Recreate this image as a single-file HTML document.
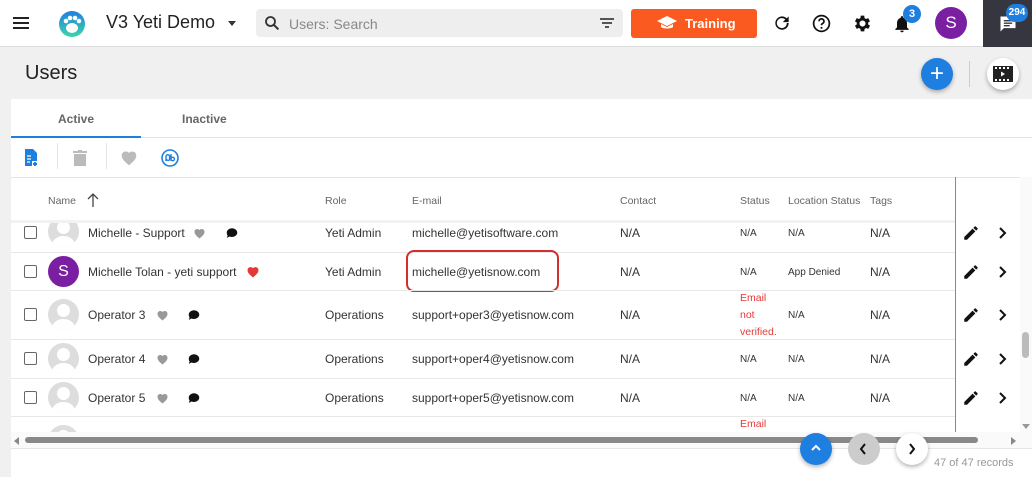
<!DOCTYPE html>
<html><head><style>
*{box-sizing:border-box;margin:0;padding:0}
body{width:1032px;height:477px;overflow:hidden;background:#f0f0f0;font-family:"Liberation Sans",sans-serif;color:#333;position:relative}
.a{position:absolute}
.top{left:0;top:0;width:1032px;height:47px;background:#fff;border-bottom:1px solid #ddd}
.t{font-size:12px;color:#333;white-space:nowrap}
.h{font-size:10.5px;color:#666}
.cb{width:13px;height:13px;border:1.5px solid #666;border-radius:2px}
.av{width:31px;height:31px;border-radius:50%;background:#ddd;overflow:hidden}
.av:before{content:"";position:absolute;left:9px;top:5px;width:13px;height:13px;border-radius:50%;background:#fff}
.av:after{content:"";position:absolute;left:4px;top:20px;width:23px;height:18px;border-radius:50%;background:#fff}
.rl{left:11px;width:944px;height:1px;background:#e8e8e8}
.red{color:#e53935;font-size:10.5px;line-height:17px}
.na{font-size:10px}
</style></head><body>
<svg width="0" height="0" style="position:absolute"><defs><path id="hrt" d="M12 21l-1.5-1.3C5 15 2 12 2 7.5 2 4.4 4.4 2 7.5 2c1.7 0 3.4.8 4.5 2.1C13.1 2.8 14.8 2 16.5 2 19.6 2 22 4.4 22 7.5c0 4.5-3 7.5-8.5 12.2z"/><path id="pen" d="M3 17.3V21h3.7L17.8 9.9l-3.7-3.7zM20.7 7a1 1 0 0 0 0-1.4l-2.3-2.3a1 1 0 0 0-1.4 0l-1.8 1.8 3.7 3.7z"/><path id="chat" d="M2 6c0-3 3-5 6-5s6 2 6 5-3 5-6 5c-1 0-2-.2-2.8-.5L2 12l1-2.5C2.4 8.5 2 7.3 2 6z"/></defs></svg>
<div class="a top"></div>
<div class="a" style="left:13px;top:17px;width:16px;height:2px;background:#222;box-shadow:0 5px 0 #222,0 10px 0 #222"></div>
<svg class="a" style="left:57px;top:8px" width="30" height="30" viewBox="0 0 30 30"><defs><linearGradient id="g" x1="0" y1="0" x2="0" y2="1"><stop offset="0" stop-color="#1e7fe0"/><stop offset="1" stop-color="#3dd6a8"/></linearGradient></defs><circle cx="15" cy="16" r="13" fill="url(#g)"/><ellipse cx="15" cy="20" rx="6" ry="5" fill="#fff"/><circle cx="9" cy="13" r="2.3" fill="#fff"/><circle cx="13" cy="10" r="2.3" fill="#fff"/><circle cx="18" cy="10" r="2.3" fill="#fff"/><circle cx="22" cy="13" r="2.3" fill="#fff"/></svg>
<div class="a" style="left:106px;top:12px;font-size:18px;color:#222">V3 Yeti Demo</div>
<div class="a" style="left:228px;top:21px;border:4px solid transparent;border-top:5px solid #333"></div>
<div class="a" style="left:256px;top:9px;width:367px;height:28px;background:#eee;border-radius:4px"></div>
<svg class="a" style="left:263px;top:14px" width="18" height="18" viewBox="0 0 24 24"><circle cx="10" cy="10" r="6" stroke="#333" stroke-width="2.4" fill="none"/><path d="M14.5 14.5l6 6" stroke="#333" stroke-width="2.6"/></svg>
<div class="a" style="left:289px;top:16px;font-size:14px;color:#888">Users: Search</div>
<div class="a" style="left:600px;top:18px;width:14px;height:2px;background:#555"></div>
<div class="a" style="left:602px;top:22px;width:10px;height:2px;background:#555"></div>
<div class="a" style="left:605px;top:26px;width:4px;height:2px;background:#555"></div>
<div class="a" style="left:631px;top:9px;width:126px;height:29px;background:#fa5a1f;border-radius:3px;color:#fff;font-size:13px;font-weight:bold;padding:7px 0 0 54px">Training</div>
<svg class="a" style="left:657px;top:15px" width="20" height="16" viewBox="0 0 20 16"><path d="M10 1L0 6l10 5 10-5z M4 9v3c2 2 10 2 12 0V9l-6 3z" fill="#fff"/></svg>
<svg class="a" style="left:772px;top:13px" width="20" height="20" viewBox="0 0 24 24"><path d="M17.6 6.4A8 8 0 1 0 20 12h-2.2a6 6 0 1 1-1.8-4.2L13 11h7V4z" fill="#111"/></svg>
<svg class="a" style="left:811px;top:13px" width="21" height="21" viewBox="0 0 24 24"><circle cx="12" cy="12" r="9" stroke="#111" stroke-width="2" fill="none"/><path d="M9.2 9.5a2.8 2.8 0 1 1 4 2.5c-1 .5-1.2 1-1.2 2" stroke="#111" stroke-width="2" fill="none"/><circle cx="12" cy="17" r="1.2" fill="#111"/></svg>
<svg class="a" style="left:852px;top:13px" width="21" height="21" viewBox="0 0 24 24"><path d="M19.4 13a7.5 7.5 0 0 0 0-2l2.1-1.6-2-3.5-2.5 1a7 7 0 0 0-1.7-1L15 3h-4l-.4 2.9a7 7 0 0 0-1.7 1l-2.5-1-2 3.5L6.5 11a7.5 7.5 0 0 0 0 2l-2.1 1.6 2 3.5 2.5-1a7 7 0 0 0 1.7 1L11 21h4l.4-2.9a7 7 0 0 0 1.7-1l2.5 1 2-3.5zM13 15.5a3.5 3.5 0 1 1 0-7 3.5 3.5 0 0 1 0 7z" fill="#111" transform="translate(-1 0)"/></svg>
<svg class="a" style="left:892px;top:14px" width="20" height="20" viewBox="0 0 24 24"><path d="M12 22a2 2 0 0 0 2-2h-4a2 2 0 0 0 2 2zm6-6V11c0-3-1.6-5.6-4.5-6.3V4a1.5 1.5 0 0 0-3 0v.7C7.6 5.4 6 8 6 11v5l-2 2v1h16v-1z" fill="#111"/></svg>
<div class="a" style="left:903px;top:5px;width:18px;height:18px;border-radius:50%;background:#1e7fe0;color:#fff;font-size:11px;font-weight:bold;text-align:center;line-height:18px">3</div>
<div class="a" style="left:935px;top:7px;width:32px;height:32px;border-radius:50%;background:#7b1fa2;color:#fff;font-size:17px;text-align:center;line-height:32px">S</div>
<div class="a" style="left:983px;top:0;width:49px;height:47px;background:#35363f"></div>
<svg class="a" style="left:998px;top:14px" width="20" height="20" viewBox="0 0 24 24"><path d="M3 3h18v14H7l-4 4z" fill="#fff"/><path d="M7 8h10M7 11h10M7 14h7" stroke="#35363f" stroke-width="1.6"/></svg>
<div class="a" style="left:1006px;top:4px;width:22px;height:18px;border-radius:9px;background:#1e7fe0;color:#fff;font-size:10px;font-weight:bold;text-align:center;line-height:18px">294</div>

<div class="a" style="left:25px;top:62px;font-size:20px;color:#222">Users</div>
<div class="a" style="left:921px;top:58px;width:32px;height:32px;border-radius:50%;background:#1e7fe0;box-shadow:0 2px 4px rgba(0,0,0,.3);color:#fff;font-size:24px;text-align:center;line-height:31px">+</div>
<div class="a" style="left:969px;top:61px;width:1px;height:26px;background:#ccc"></div>
<div class="a" style="left:987px;top:58px;width:32px;height:32px;border-radius:50%;background:#fff;box-shadow:0 2px 4px rgba(0,0,0,.3)"></div>
<svg class="a" style="left:993px;top:66px" width="20" height="16" viewBox="0 0 20 16"><rect x="0" y="0" width="20" height="16" fill="#222"/><path d="M2 1h2v2H2zm4 0h2v2H6zm4 0h2v2h-2zm4 0h2v2h-2zM2 13h2v2H2zm4 0h2v2H6zm4 0h2v2h-2zm4 0h2v2h-2z" fill="#fff"/><path d="M8 5.5v5l4-2.5z" fill="#fff"/></svg>

<div class="a" style="left:11px;top:99px;width:1021px;height:378px;background:#fff"></div>
<div class="a" style="left:11px;top:137px;width:1021px;height:1px;background:#e5e5e5"></div>
<div class="a" style="left:58px;top:112px;font-size:12px;font-weight:bold;color:#666">Active</div>
<div class="a" style="left:182px;top:112px;font-size:12px;font-weight:bold;color:#666">Inactive</div>
<div class="a" style="left:11px;top:136px;width:130px;height:2px;background:#1e7fe0"></div>
<svg class="a" style="left:24px;top:149px" width="16" height="18" viewBox="0 0 16 18"><path d="M1 0h8l4 4v8H8v5H1z" fill="#1e7fe0"/><path d="M3 7h4M3 10h4M3 13h3" stroke="#fff" stroke-width="1.2"/><path d="M11 13v4M9 15h4" stroke="#1e7fe0" stroke-width="2"/></svg>
<div class="a" style="left:57px;top:143px;width:1px;height:26px;background:#e5e5e5"></div>
<svg class="a" style="left:73px;top:150px" width="14" height="16" viewBox="0 0 14 16"><path d="M0 1h14v2H0zM5 0h4v1H5zM1 4h12v12H1z" fill="#bbb"/></svg>
<div class="a" style="left:106px;top:143px;width:1px;height:26px;background:#e5e5e5"></div>
<svg class="a" style="left:120px;top:150px" width="18" height="16" viewBox="0 0 24 22"><use href="#hrt" fill="#bbb"/></svg>
<svg class="a" style="left:161px;top:149px" width="18" height="18" viewBox="0 0 18 18"><circle cx="9" cy="9" r="8" stroke="#1e7fe0" stroke-width="1.6" fill="none"/><path d="M5 12V7.5a1.8 1.8 0 0 1 3.6 0V10a1.5 1.5 0 0 1-3 0M10 5v7M10 10a1.7 1.7 0 1 0 3.4 0 1.7 1.7 0 1 0-3.4 0" stroke="#1e7fe0" stroke-width="1.4" fill="none"/></svg>
<div class="a" style="left:11px;top:177px;width:1021px;height:1px;background:#e5e5e5"></div>

<div class="a h" style="left:48px;top:195px">Name</div>
<svg class="a" style="left:87px;top:193px" width="12" height="14" viewBox="0 0 12 14"><path d="M6 1v13M1 6l5-5 5 5" stroke="#444" stroke-width="1.3" fill="none"/></svg>
<div class="a h" style="left:325px;top:195px">Role</div>
<div class="a h" style="left:412px;top:195px">E-mail</div>
<div class="a h" style="left:620px;top:195px">Contact</div>
<div class="a h" style="left:740px;top:195px">Status</div>
<div class="a h" style="left:788px;top:195px">Location Status</div>
<div class="a h" style="left:870px;top:195px">Tags</div>
<div class="a" style="left:11px;top:220px;width:944px;height:3px;background:#f2f2f2"></div>
<div class="a" style="left:955px;top:177px;width:1px;height:263px;background:#888"></div>
<div class="a" style="left:1020px;top:177px;width:12px;height:263px;background:#fafafa"></div>
<div class="a" style="left:1022px;top:332px;width:7px;height:26px;border-radius:4px;background:#bbb"></div>
<div class="a" style="left:1022px;top:424px;border:4px solid transparent;border-top:5px solid #999"></div>

<!-- row 1 -->
<div class="a cb" style="left:24px;top:226px"></div>
<div class="a av" style="left:48px;top:216px;clip-path:inset(7px 0 0 0)"></div>
<div class="a t" style="left:88px;top:226px">Michelle - Support</div>
<svg class="a" style="left:193px;top:228px" width="13" height="11" viewBox="0 0 24 22"><use href="#hrt" fill="#999"/></svg>
<svg class="a" style="left:225px;top:227px" width="14" height="12" viewBox="0 0 16 13"><use href="#chat" fill="#111"/></svg>
<div class="a t" style="left:325px;top:226px">Yeti Admin</div>
<div class="a t" style="left:412px;top:226px">michelle@yetisoftware.com</div>
<div class="a t" style="left:620px;top:226px">N/A</div>
<div class="a na" style="left:740px;top:228px">N/A</div>
<div class="a na" style="left:788px;top:228px">N/A</div>
<div class="a t" style="left:870px;top:226px">N/A</div>
<div class="a rl" style="top:252px"></div>
<!-- row 2 -->
<div class="a cb" style="left:24px;top:265px"></div>
<div class="a" style="left:48px;top:256px;width:31px;height:31px;border-radius:50%;background:#7b1fa2;color:#fff;font-size:16px;text-align:center;line-height:31px">S</div>
<div class="a t" style="left:88px;top:265px">Michelle Tolan - yeti support</div>
<svg class="a" style="left:246px;top:266px" width="14" height="12" viewBox="0 0 24 22"><use href="#hrt" fill="#e53935"/></svg>
<div class="a t" style="left:325px;top:265px">Yeti Admin</div>
<div class="a" style="left:406px;top:250px;width:153px;height:42px;border:2px solid #d32f2f;border-radius:8px"></div>
<div class="a t" style="left:412px;top:265px">michelle@yetisnow.com</div>
<div class="a t" style="left:620px;top:265px">N/A</div>
<div class="a na" style="left:740px;top:267px">N/A</div>
<div class="a na" style="left:788px;top:267px">App Denied</div>
<div class="a t" style="left:870px;top:265px">N/A</div>
<div class="a rl" style="top:290px"></div>
<!-- row 3 -->
<div class="a cb" style="left:24px;top:308px"></div>
<div class="a av" style="left:48px;top:299px"></div>
<div class="a t" style="left:88px;top:308px">Operator 3</div>
<svg class="a" style="left:156px;top:310px" width="13" height="11" viewBox="0 0 24 22"><use href="#hrt" fill="#999"/></svg>
<svg class="a" style="left:187px;top:309px" width="14" height="12" viewBox="0 0 16 13"><use href="#chat" fill="#111"/></svg>
<div class="a t" style="left:325px;top:308px">Operations</div>
<div class="a t" style="left:412px;top:308px">support+oper3@yetisnow.com</div>
<div class="a t" style="left:620px;top:308px">N/A</div>
<div class="a red" style="left:740px;top:290px">Email<br>not<br>verified.</div>
<div class="a na" style="left:788px;top:310px">N/A</div>
<div class="a t" style="left:870px;top:308px">N/A</div>
<div class="a rl" style="top:339px"></div>
<!-- row 4 -->
<div class="a cb" style="left:24px;top:352px"></div>
<div class="a av" style="left:48px;top:343px"></div>
<div class="a t" style="left:88px;top:352px">Operator 4</div>
<svg class="a" style="left:156px;top:354px" width="13" height="11" viewBox="0 0 24 22"><use href="#hrt" fill="#999"/></svg>
<svg class="a" style="left:187px;top:353px" width="14" height="12" viewBox="0 0 16 13"><use href="#chat" fill="#111"/></svg>
<div class="a t" style="left:325px;top:352px">Operations</div>
<div class="a t" style="left:412px;top:352px">support+oper4@yetisnow.com</div>
<div class="a t" style="left:620px;top:352px">N/A</div>
<div class="a na" style="left:740px;top:354px">N/A</div>
<div class="a na" style="left:788px;top:354px">N/A</div>
<div class="a t" style="left:870px;top:352px">N/A</div>
<div class="a rl" style="top:378px"></div>
<!-- row 5 -->
<div class="a cb" style="left:24px;top:391px"></div>
<div class="a av" style="left:48px;top:382px"></div>
<div class="a t" style="left:88px;top:391px">Operator 5</div>
<svg class="a" style="left:156px;top:393px" width="13" height="11" viewBox="0 0 24 22"><use href="#hrt" fill="#999"/></svg>
<svg class="a" style="left:187px;top:392px" width="14" height="12" viewBox="0 0 16 13"><use href="#chat" fill="#111"/></svg>
<div class="a t" style="left:325px;top:391px">Operations</div>
<div class="a t" style="left:412px;top:391px">support+oper5@yetisnow.com</div>
<div class="a t" style="left:620px;top:391px">N/A</div>
<div class="a na" style="left:740px;top:393px">N/A</div>
<div class="a na" style="left:788px;top:393px">N/A</div>
<div class="a t" style="left:870px;top:391px">N/A</div>
<div class="a rl" style="top:416px"></div>
<div class="a av" style="left:48px;top:425px;clip-path:inset(0 0 16px 0)"></div>
<div class="a red" style="left:740px;top:416px">Email</div>

<!-- action column -->
<svg class="a" style="left:962px;top:224px" width="18" height="18" viewBox="0 0 24 24"><use href="#pen" fill="#111"/></svg>
<svg class="a" style="left:962px;top:263px" width="18" height="18" viewBox="0 0 24 24"><use href="#pen" fill="#111"/></svg>
<svg class="a" style="left:962px;top:306px" width="18" height="18" viewBox="0 0 24 24"><use href="#pen" fill="#111"/></svg>
<svg class="a" style="left:962px;top:350px" width="18" height="18" viewBox="0 0 24 24"><use href="#pen" fill="#111"/></svg>
<svg class="a" style="left:962px;top:389px" width="18" height="18" viewBox="0 0 24 24"><use href="#pen" fill="#111"/></svg>
<svg class="a" style="left:998px;top:227px" width="10" height="12" viewBox="0 0 10 12"><path d="M2 1l5 5-5 5" stroke="#111" stroke-width="2" fill="none"/></svg>
<svg class="a" style="left:998px;top:266px" width="10" height="12" viewBox="0 0 10 12"><path d="M2 1l5 5-5 5" stroke="#111" stroke-width="2" fill="none"/></svg>
<svg class="a" style="left:998px;top:309px" width="10" height="12" viewBox="0 0 10 12"><path d="M2 1l5 5-5 5" stroke="#111" stroke-width="2" fill="none"/></svg>
<svg class="a" style="left:998px;top:353px" width="10" height="12" viewBox="0 0 10 12"><path d="M2 1l5 5-5 5" stroke="#111" stroke-width="2" fill="none"/></svg>
<svg class="a" style="left:998px;top:392px" width="10" height="12" viewBox="0 0 10 12"><path d="M2 1l5 5-5 5" stroke="#111" stroke-width="2" fill="none"/></svg>

<!-- scrollbar / footer -->
<div class="a" style="left:11px;top:432px;width:1021px;height:16px;background:#fafafa"></div>
<div class="a" style="left:14px;top:437px;border:4px solid transparent;border-right:5px solid #888;border-left:0"></div>
<div class="a" style="left:25px;top:437px;width:953px;height:6px;border-radius:3px;background:#888"></div>
<div class="a" style="left:1011px;top:437px;border:4px solid transparent;border-left:5px solid #888;border-right:0"></div>
<div class="a" style="left:11px;top:448px;width:1021px;height:1px;background:#e5e5e5"></div>
<div class="a" style="left:800px;top:433px;width:32px;height:32px;border-radius:50%;background:#1e7fe0;box-shadow:0 2px 4px rgba(0,0,0,.3)"></div>
<svg class="a" style="left:810px;top:444px" width="12" height="8" viewBox="0 0 12 8"><path d="M2 6l4-4 4 4" stroke="#fff" stroke-width="2" fill="none"/></svg>
<div class="a" style="left:848px;top:433px;width:32px;height:32px;border-radius:50%;background:#ccc"></div>
<svg class="a" style="left:859px;top:443px" width="8" height="12" viewBox="0 0 8 12"><path d="M6 1L2 6l4 5" stroke="#111" stroke-width="2" fill="none"/></svg>
<div class="a" style="left:896px;top:433px;width:32px;height:32px;border-radius:50%;background:#fff;box-shadow:0 2px 4px rgba(0,0,0,.3)"></div>
<svg class="a" style="left:908px;top:443px" width="8" height="12" viewBox="0 0 8 12"><path d="M2 1l4 5-4 5" stroke="#111" stroke-width="2" fill="none"/></svg>
<div class="a" style="left:934px;top:457px;font-size:11px;color:#999">47 of 47 records</div>
</body></html>
